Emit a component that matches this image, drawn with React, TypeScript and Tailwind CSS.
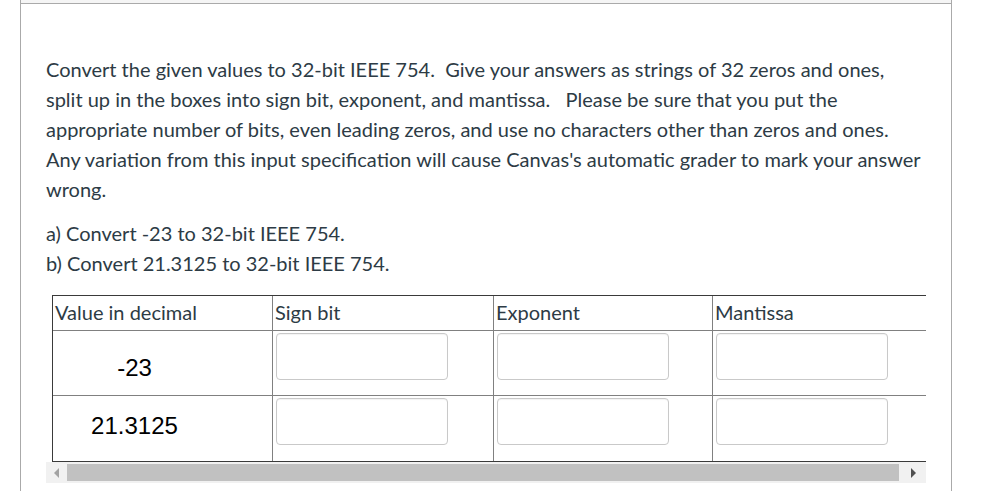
import * as React from "react"

const lato = { fontFamily: "Lato, 'Noto Sans', sans-serif" }

function AnswerBox() {
    return (
        <div className="ml-[3px] mt-[2px] w-[172px] h-[47px] rounded-[4px] border border-[#c9c9c9] bg-white shadow-[inset_0_1px_1px_rgba(0,0,0,0.05)]" />
    )
}

function BodyRow({ value, top, last }: { value: string; top: string; last?: boolean }) {
    return (
        <div className={`flex h-[65px] ${last ? "" : "border-b border-[#808080]"}`}>
            <div className="w-[220px] shrink-0 border-r border-[#808080]">
                <div className={`w-[163px] text-center text-[24px] leading-[28px] text-black ${top}`} style={{ fontFamily: "'Liberation Sans', Arial, sans-serif" }}>
                    {value}
                </div>
            </div>
            <div className="w-[221px] shrink-0 border-r border-[#808080]"><AnswerBox /></div>
            <div className="w-[219px] shrink-0 border-r border-[#808080]"><AnswerBox /></div>
            <div className="w-[220px] shrink-0 border-r border-[#808080]"><AnswerBox /></div>
        </div>
    )
}

export default function App() {
    return (
        <div className="bg-white w-[994px] h-[491px] overflow-hidden" style={lato}>
            <div className="ml-[20px] w-[932px] h-[491px] border-x border-[#aaaaaa]">
                <div className="h-[3px] bg-[#f5f5f5]" />
                <div className="border-t border-[#aaaaaa] pl-[25px] pt-[50px] text-[#2d3b45]">
                    <p className="text-[20px] leading-[30px] whitespace-nowrap">
                        Convert the given values to 32-bit IEEE 754.{"\u00a0 "}Give your answers as strings of 32 zeros and ones,<br />
                        split up in the boxes into sign bit, exponent, and mantissa.{"\u00a0\u00a0 "}Please be sure that you put the<br />
                        appropriate number of bits, even leading zeros, and use no characters other than zeros and ones.<br />
                        Any variation from this input specification will cause Canvas's automatic grader to mark your answer<br />
                        wrong.
                    </p>
                    <p className="mt-[14px] text-[20px] leading-[30px] whitespace-nowrap">
                        a) Convert -23 to 32-bit IEEE 754.<br />
                        b) Convert 21.3125 to 32-bit IEEE 754.
                    </p>

                    <div className="mt-[17px] w-[880px] overflow-hidden">
                        <div className="ml-[6px] w-[1100px] border-t border-l border-b border-[#3a3a3a]">
                            <div className="flex h-[35px] border-b border-[#808080] text-[20px] text-[#2d3b45]">
                                <div className="w-[220px] shrink-0 border-r border-[#808080] pl-[2px] pb-[2px] flex items-center">Value in decimal</div>
                                <div className="w-[221px] shrink-0 border-r border-[#808080] pl-[2px] pb-[2px] flex items-center">Sign bit</div>
                                <div className="w-[219px] shrink-0 border-r border-[#808080] pl-[2px] pb-[2px] flex items-center">Exponent</div>
                                <div className="w-[220px] shrink-0 border-r border-[#808080] pl-[2px] pb-[2px] flex items-center">Mantissa</div>
                            </div>
                            <BodyRow value="-23" top="pt-[23px]" />
                            <BodyRow value="21.3125" top="pt-[16px]" last />
                        </div>
                        {/* horizontal scrollbar */}
                        <div className="flex h-[21px] bg-[#f1f1f1]">
                            <div className="w-[21px] flex items-center justify-center">
                                <svg width="6" height="10" viewBox="0 0 6 10"><path d="M5 0 L0 5 L5 10 Z" fill="#a3a3a3" /></svg>
                            </div>
                            <div className="w-[832px] my-[2px] bg-[#c1c1c1]" />
                            <div className="flex-1 flex items-center justify-center">
                                <svg width="6" height="10" viewBox="0 0 6 10"><path d="M1 0 L6 5 L1 10 Z" fill="#505050" /></svg>
                            </div>
                        </div>
                    </div>
                </div>
            </div>
        </div>
    )
}
